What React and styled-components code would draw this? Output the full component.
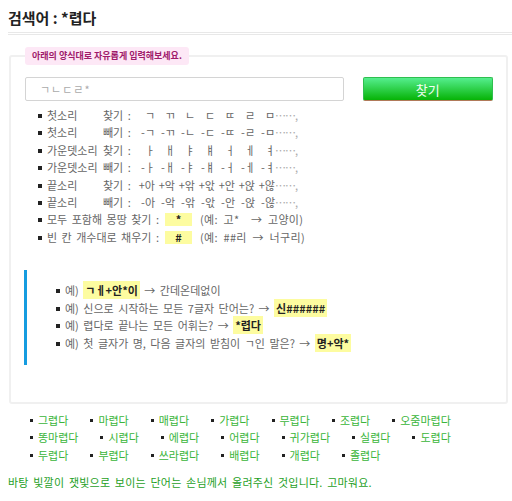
import React from "react";
import styled, { createGlobalStyle } from "styled-components";

const GlobalStyle = createGlobalStyle`
  html, body {
    margin: 0;
    padding: 0;
    background: #fff;
  }
  body {
    font-family: "Noto Sans CJK KR", "Noto Sans", sans-serif;
  }
`;

const Page = styled.div`
  padding: 8px 4px 8px 8px;
  font-family: "Noto Sans CJK KR", "Noto Sans", sans-serif;
`;

const Title = styled.h1`
  margin: 0;
  font-size: 15px;
  line-height: 20px;
  font-weight: 700;
  color: #222;
`;

const TitleRule = styled.div`
  margin: 4px -4px 0 0;
  height: 1px;
  border-top: 1px solid #e8e8e8;
  border-bottom: 1px solid #e8e8e8;
`;

const SearchBox = styled.fieldset`
  margin: 12px 0 0 1px;
  padding: 12px 13px 37px 14px;
  border: 2px solid #f0f0f0;
  border-radius: 3px;
  min-width: 0;
`;

const Legend = styled.legend`
  margin-left: 0;
  padding: 4px 7px;
  font-size: 9px;
  line-height: 10px;
  font-weight: 700;
  color: #a01a6a;
  background: #fde8f6;
  border-radius: 3px;
`;

const InputRow = styled.div`
  display: flex;
  gap: 19px;
`;

const Field = styled.input`
  box-sizing: border-box;
  width: 320px;
  height: 24px;
  padding: 0 0 0 14px;
  border: 1px solid #d4d4d4;
  border-radius: 2px;
  font-family: inherit;
  font-size: 11px;
  letter-spacing: 1px;
  outline: none;
  &::placeholder {
    color: #aaa;
  }
`;

const SearchButton = styled.button`
  box-sizing: border-box;
  width: 131px;
  height: 24px;
  border: 1px solid #2fbf4f;
  border-bottom-color: #b07a5a;
  border-radius: 2px;
  background: linear-gradient(#55ee8e, #06b306);
  color: #f4fff4;
  font-family: inherit;
  font-size: 13px;
  cursor: pointer;
`;

const RuleList = styled.ul`
  margin: 6px 0 0;
  padding: 0 0 0 13px;
  list-style: none;
  font-size: 11px;
  line-height: 17.4px;
  color: #666;
  word-spacing: 2px;
`;

const Bulleted = styled.li`
  position: relative;
  padding-left: 9px;
  white-space: nowrap;
  &::before {
    content: "";
    position: absolute;
    left: 0;
    top: 7px;
    width: 4px;
    height: 4px;
    background: #222;
  }
`;

const Label = styled.span`
  display: inline-block;
  width: 56px;
`;

const Action = styled.span`
  display: inline-block;
  width: 32px;
`;

const Token = styled.span`
  display: inline-block;
  width: 20px;
  text-align: right;
`;

const Tail = styled.span`
  color: #aaa;
  letter-spacing: -1px;
`;

const Key = styled.span`
  display: inline-block;
  width: 27px;
  margin: 0 8px 0 6px;
  text-align: center;
  line-height: 13px;
  font-weight: 700;
  color: #222;
  background: #fdfca0;
`;

const Hint = styled.span`
  word-spacing: 3px;
  letter-spacing: 0.3px;
`;

const Quote = styled.div`
  margin-top: 24px;
  margin-left: -1px;
  padding: 12px 0 12px 29px;
  border-left: 3px solid #159ce0;
`;

const ExampleList = styled.ul`
  margin: 0;
  padding: 0;
  list-style: none;
  font-size: 11px;
  line-height: 17.6px;
  color: #666;
  word-spacing: 2px;
`;

const Mark = styled.span`
  padding: 1px 2px;
  font-weight: 700;
  color: #222;
  background: #fdfca0;
`;

const WordList = styled.ul`
  margin: 8px 0 0;
  padding: 0 0 0 22px;
  list-style: none;
  font-size: 11px;
  line-height: 17.5px;
`;

const Word = styled.li`
  display: inline-block;
  position: relative;
  margin-right: 22px;
  padding-left: 8px;
  color: #3ab53a;
  &::before {
    content: "";
    position: absolute;
    left: 0;
    top: 7px;
    width: 3px;
    height: 3px;
    background: #222;
  }
`;

const WordRow = styled.div`
  white-space: nowrap;
`;

const Note = styled.p`
  margin: 10px 0 0;
  font-size: 11px;
  line-height: 16px;
  color: #1f9f1f;
  word-spacing: 2px;
  letter-spacing: 0.2px;
`;

const rows = [
  { label: "첫소리", act: "찾기", tokens: ["ㄱ", "ㄲ", "ㄴ", "ㄷ", "ㄸ", "ㄹ", "ㅁ"] },
  { label: "첫소리", act: "빼기", tokens: ["-ㄱ", "-ㄲ", "-ㄴ", "-ㄷ", "-ㄸ", "-ㄹ", "-ㅁ"] },
  { label: "가운뎃소리", act: "찾기", tokens: ["ㅏ", "ㅐ", "ㅑ", "ㅒ", "ㅓ", "ㅔ", "ㅕ"] },
  { label: "가운뎃소리", act: "빼기", tokens: ["-ㅏ", "-ㅐ", "-ㅑ", "-ㅒ", "-ㅓ", "-ㅔ", "-ㅕ"] },
  { label: "끝소리", act: "찾기", tokens: ["+아", "+악", "+앆", "+앇", "+안", "+앉", "+않"] },
  { label: "끝소리", act: "빼기", tokens: ["-아", "-악", "-앆", "-앇", "-안", "-앉", "-않"] },
];

const examples = [
  { before: "예) ", mark: "ㄱㅔ+안*이", after: " → 간데온데없이" },
  { before: "예) 신으로 시작하는 모든 7글자 단어는? → ", mark: "신######" },
  { before: "예) 렵다로 끝나는 모든 어휘는? → ", mark: "*렵다" },
  { before: "예) 첫 글자가 명, 다음 글자의 받침이 ㄱ인 말은? → ", mark: "명+악*" },
];

const words = [
  ["그렵다", "마렵다", "매렵다", "가렵다", "무렵다", "조렵다", "오줌마렵다"],
  ["똥마렵다", "시렵다", "에렵다", "어렵다", "귀가렵다", "실렵다", "도렵다"],
  ["두렵다", "부렵다", "쓰라렵다", "배렵다", "개렵다", "졸렵다"],
];

export default function App() {
  return (
    <Page>
      <GlobalStyle />
      <Title>검색어 : *렵다</Title>
      <TitleRule />

      <SearchBox>
        <Legend>아래의 양식대로 자유롭게 입력해보세요.</Legend>
        <InputRow>
          <Field placeholder="ㄱㄴㄷㄹ*" />
          <SearchButton>찾기</SearchButton>
        </InputRow>

        <RuleList>
          {rows.map((r, i) => (
            <Bulleted key={i}>
              <Label>{r.label}</Label>
              <Action>{r.act} :</Action>
              {r.tokens.map((t) => (
                <Token key={t}>{t}</Token>
              ))}
              <Tail>……,</Tail>
            </Bulleted>
          ))}
          <Bulleted>
            모두 포함해 몽땅 찾기 :<Key>*</Key>
            <Hint>(예: 고*&nbsp;&nbsp;→ 고양이)</Hint>
          </Bulleted>
          <Bulleted>
            빈 칸 개수대로 채우기 :<Key>#</Key>
            <Hint>(예: ##리 → 너구리)</Hint>
          </Bulleted>
        </RuleList>

        <Quote>
          <ExampleList>
            {examples.map((e, i) => (
              <Bulleted key={i}>
                {e.before}
                <Mark>{e.mark}</Mark>
                {e.after}
              </Bulleted>
            ))}
          </ExampleList>
        </Quote>
      </SearchBox>

      <WordList>
        {words.map((row, i) => (
          <WordRow key={i}>
            {row.map((w) => (
              <Word key={w}>{w}</Word>
            ))}
          </WordRow>
        ))}
      </WordList>

      <Note>바탕 빛깔이 잿빛으로 보이는 단어는 손님께서 올려주신 것입니다. 고마워요.</Note>
    </Page>
  );
}
